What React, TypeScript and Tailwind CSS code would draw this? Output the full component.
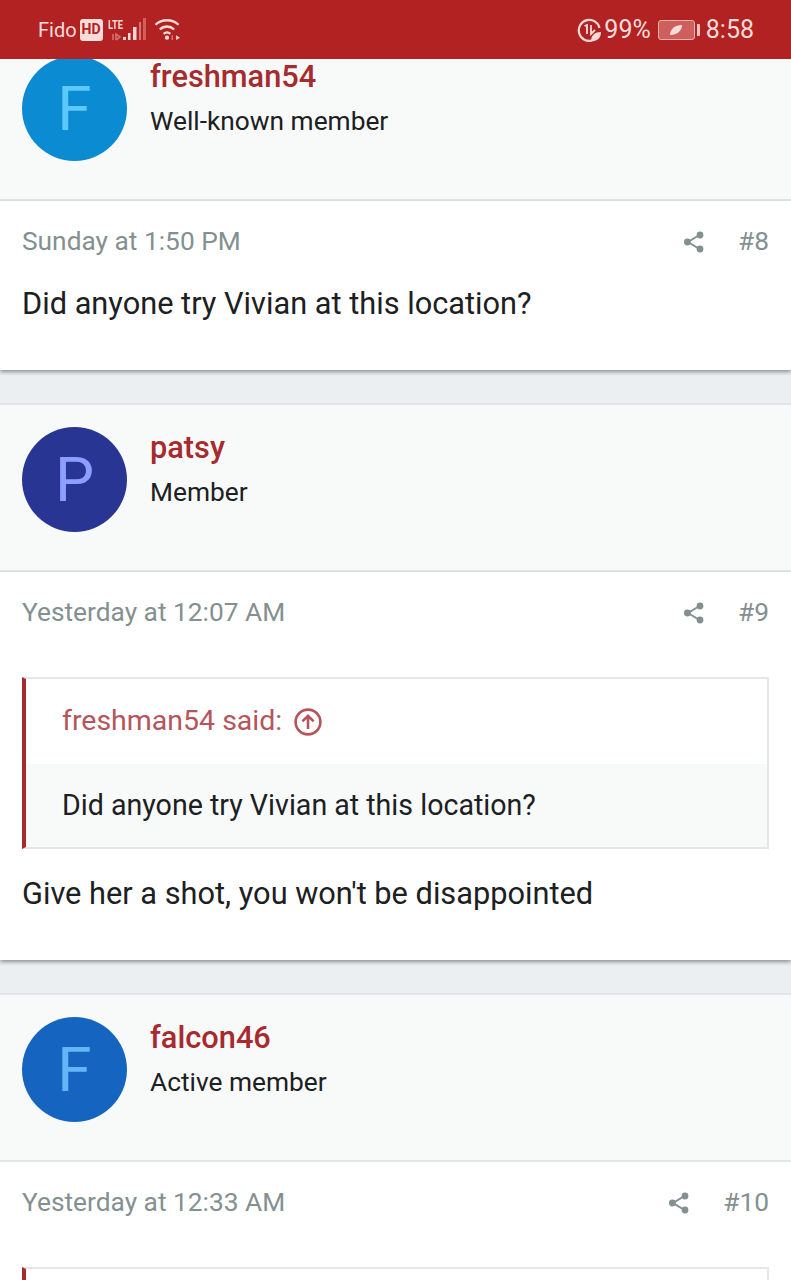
const font = { fontFamily: "Roboto, 'Noto Sans', sans-serif" };

function Share() {
  return (
    <svg width="22" height="22" viewBox="0 0 22 22" className="text-[#84908f]" fill="none">
      <path d="M16.5 4 L5 11 L16.5 18" stroke="currentColor" strokeWidth="2" />
      <circle cx="17" cy="4" r="3.4" fill="currentColor" />
      <circle cx="4.4" cy="11" r="3.4" fill="currentColor" />
      <circle cx="17" cy="18" r="3.4" fill="currentColor" />
    </svg>
  );
}

function UpCircle() {
  return (
    <svg width="28" height="28" viewBox="0 0 28 28" fill="none" stroke="#b5555b" strokeWidth="2.6">
      <circle cx="14" cy="14" r="12.4" />
      <path d="M14 21 V8 M8.4 13.4 L14 7.8 L19.6 13.4" />
    </svg>
  );
}

function SignalIcons() {
  return (
    <svg width="40" height="23" viewBox="0 0 40 23" fill="none">
      <text x="0" y="11" fontSize="13" fontWeight="700" fill="#f6d6d4" fontFamily="Roboto, sans-serif" textLength="15" lengthAdjust="spacingAndGlyphs">LTE</text>
      <path d="M5 16 L5 22 M8 22 L8 16 L12 19 L8 22" stroke="#d9716c" strokeWidth="1.6" />
      <rect x="15" y="19" width="3" height="3" fill="#f8dcda" />
      <rect x="20" y="15" width="2.5" height="7" fill="#f8dcda" />
      <rect x="25" y="9" width="3.5" height="13" fill="#f6d6d4" />
      <rect x="31" y="4" width="2" height="18" fill="#d9716c" />
      <rect x="35" y="0" width="3" height="22" fill="#cf605b" />
    </svg>
  );
}

function Wifi() {
  return (
    <svg width="27" height="23" viewBox="0 0 28 24" fill="none" stroke="#f8dcda" strokeWidth="2.4">
      <path d="M1.5 7 C8 0.8 19 0.8 25.5 7" />
      <path d="M6 12 C10.5 7.8 16.5 7.8 21 12" />
      <path d="M10 16.5 C12.4 14.4 14.6 14.4 17 16.5" />
      <circle cx="13.5" cy="20.5" r="2.2" fill="#f8dcda" stroke="none" />
      <path d="M19 18 V23" stroke="#d9716c" strokeWidth="1.6" />
      <path d="M23 18 L27 20.5 L23 23 Z" fill="#f8dcda" stroke="none" />
    </svg>
  );
}

function DataSaver() {
  return (
    <svg width="24" height="24" viewBox="0 0 24 24" fill="none">
      <path d="M15 22.5 A10.5 10.5 0 1 1 22.5 10" stroke="#f8dcda" strokeWidth="2.2" />
      <path d="M7.5 8 L10 7 V16 M14 7 V16 L18 12" stroke="#f8dcda" strokeWidth="1.8" />
      <path d="M14 23.5 C14 17 18 14 24 14 C24 20 20 23.5 14 23.5 Z" fill="#f8dcda" />
    </svg>
  );
}

function Battery() {
  return (
    <div className="flex items-center gap-[2px]">
      <div className="w-[37px] h-[20px] rounded-[3px] border border-[#eeb2ae] bg-[#cf5f5c] flex items-center justify-center">
        <svg width="14" height="12" viewBox="0 0 14 12">
          <path d="M1 11 C1 5 6 1 13 1 C13 7 8 11 1 11 Z" fill="#f8dcda" />
        </svg>
      </div>
      <div className="w-[3px] h-[12px] bg-[#f3c4c1] rounded-r-[1px]" />
    </div>
  );
}

function StatusBar() {
  return (
    <div className="absolute top-0 left-0 right-0 z-10 h-[59px] bg-[#b22222] flex items-center justify-between pl-[38px] pr-[37px]">
      <div className="flex items-center">
        <span className="text-[20px] text-[#f8dcda]">Fido</span>
        <span className="ml-[3px] w-[23px] h-[22px] rounded-[3px] bg-[#f8dcda] text-[#b22222] text-[14px] font-bold flex items-center justify-center">HD</span>
        <span className="ml-[5px] mt-[-1px]"><SignalIcons /></span>
        <span className="ml-[6px] mt-[-1px]"><Wifi /></span>
      </div>
      <div className="flex items-center text-[#f8dcda]">
        <DataSaver />
        <span className="ml-[3px] text-[25px] leading-none">99%</span>
        <span className="ml-[7px]"><Battery /></span>
        <span className="ml-[6px] text-[25px] leading-none">8:58</span>
      </div>
    </div>
  );
}

function Header({ name, role, letter, bg, fg }: { name: string; role: string; letter: string; bg: string; fg: string }) {
  return (
    <div className="h-[167px] bg-[#f8fafa] border-b-2 border-[#e4e7e8] pt-[22px] pl-[22px] flex">
      <div className={`w-[105px] h-[105px] rounded-full flex items-center justify-center text-[62px] leading-none ${bg} ${fg}`}>
        {letter}
      </div>
      <div className="ml-[23px] pt-[2px]">
        <div className="text-[30.75px] leading-[38px] font-medium text-[#a72a2e]">{name}</div>
        <div className="text-[26.3px] leading-[32px] mt-[9px] text-[#1c2022]">{role}</div>
      </div>
    </div>
  );
}

function Meta({ time, num, gap }: { time: string; num: string; gap: string }) {
  return (
    <div className="flex items-center justify-between h-[82px] pl-[22px] pr-[22px] text-[#84908f] text-[26.3px]">
      <span>{time}</span>
      <div className={`flex items-center ${gap}`}>
        <Share />
        <span>{num}</span>
      </div>
    </div>
  );
}

function Gap() {
  return <div className="h-[35px] bg-[#ebeff1] border-b-2 border-[#e2e5e6]" />;
}

export default function App() {
  return (
    <div className="relative h-[1280px] overflow-hidden bg-[#ebeff1]" style={font}>
      <StatusBar />
      <div className="pt-[34px]">
        <Header name="freshman54" role="Well-known member" letter="F" bg="bg-[#0b8bd1]" fg="text-[#5cc8fb]" />
        <section className="bg-white h-[169px] shadow-[0_2px_4px_rgba(0,0,0,0.4)] relative">
          <Meta time="Sunday at 1:50 PM" num="#8" gap="gap-[33px]" />
          <p className="px-[22px] text-[30.75px] leading-[36px] text-[#1c2022] mt-[3px]">Did anyone try Vivian at this location?</p>
        </section>
        <Gap />
        <Header name="patsy" role="Member" letter="P" bg="bg-[#283593]" fg="text-[#8c9eff]" />
        <section className="bg-white h-[388px] shadow-[0_2px_4px_rgba(0,0,0,0.4)] relative">
          <Meta time="Yesterday at 12:07 AM" num="#9" gap="gap-[33px]" />
          <div className="mx-[22px] mt-[23px] h-[172px] border-2 border-[#e4e7e8] border-l-4 border-l-[#a72a2e] flex flex-col">
            <div className="h-[85px] pl-[36px] flex items-center gap-[12px] text-[#b5555b] text-[28.5px]">
              <span>freshman54 said:</span>
              <UpCircle />
            </div>
            <div className="flex-1 bg-[#f8fafa] pl-[36px] flex items-center text-[28.6px] text-[#1c2022]">
              Did anyone try Vivian at this location?
            </div>
          </div>
          <p className="px-[22px] text-[30.75px] leading-[36px] text-[#1c2022] mt-[27px]">Give her a shot, you won't be disappointed</p>
        </section>
        <Gap />
        <Header name="falcon46" role="Active member" letter="F" bg="bg-[#1565c0]" fg="text-[#64b5f6]" />
        <section className="bg-white h-[200px] relative">
          <Meta time="Yesterday at 12:33 AM" num="#10" gap="gap-[33px]" />
          <div className="mx-[22px] mt-[23px] h-[100px] border-2 border-[#e4e7e8] border-l-4 border-l-[#a72a2e]" />
        </section>
      </div>
    </div>
  );
}
